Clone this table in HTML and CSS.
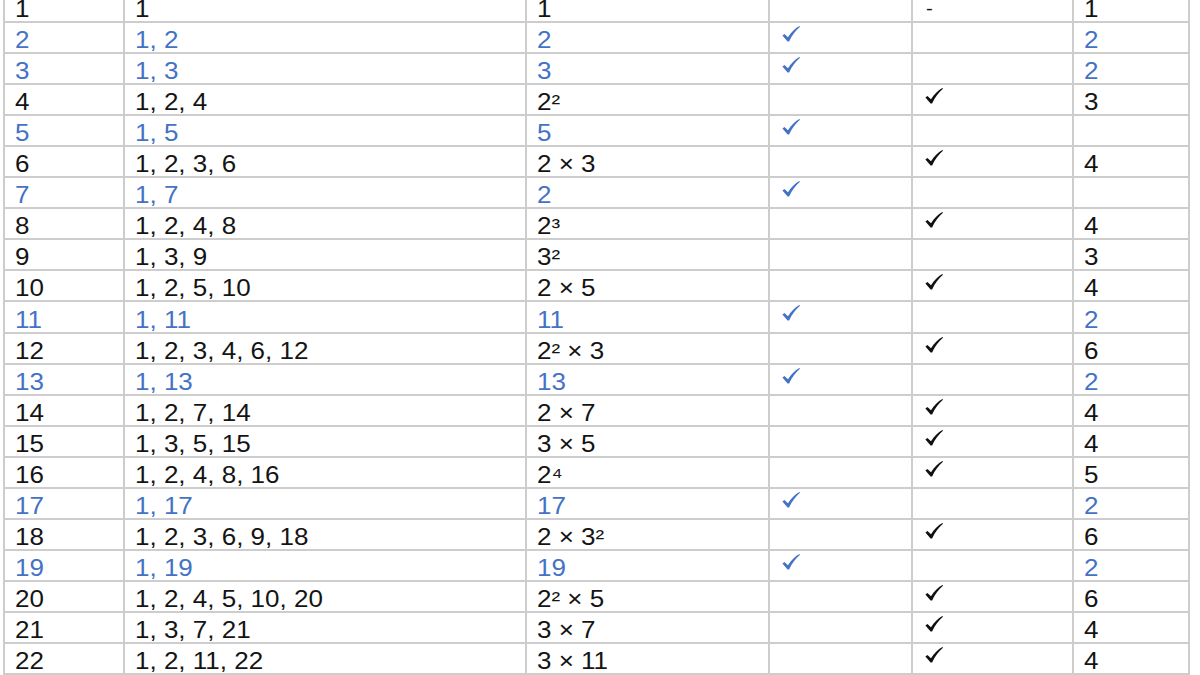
FILE: index.html
```html
<!DOCTYPE html>
<html lang="en">
<head>
<meta charset="utf-8">
<title>Divisors table</title>
<link rel="stylesheet" href="styles.css">
</head>
<body>
<svg class="defs" width="0" height="0" aria-hidden="true">
  <symbol id="chk" viewBox="0 0 18 16">
    <path d="M0.4 9.4 L2.4 7.9 L6 11.2 C9 6.3 13 2.4 17.4 0 L18 0.8 C13.6 4.6 10 9.2 7.1 15.6 L5.6 15.6 Z"/>
  </symbol>
</svg>
<table class="grid">
  <colgroup>
    <col class="c1"><col class="c2"><col class="c3"><col class="c4"><col class="c5"><col class="c6">
  </colgroup>
  <tbody>
    <tr><td><span class="t">1</span></td><td><span class="t">1</span></td><td><span class="t">1</span></td><td></td><td><span class="t dash">-</span></td><td><span class="t">1</span></td></tr>
    <tr class="prime"><td><span class="t">2</span></td><td><span class="t">1, 2</span></td><td><span class="t">2</span></td><td class="ck"><svg class="mark"><use href="#chk"/></svg></td><td></td><td><span class="t">2</span></td></tr>
    <tr class="prime"><td><span class="t">3</span></td><td><span class="t">1, 3</span></td><td><span class="t">3</span></td><td class="ck"><svg class="mark"><use href="#chk"/></svg></td><td></td><td><span class="t">2</span></td></tr>
    <tr><td><span class="t">4</span></td><td><span class="t">1, 2, 4</span></td><td><span class="t">2²</span></td><td></td><td class="ck"><svg class="mark"><use href="#chk"/></svg></td><td><span class="t">3</span></td></tr>
    <tr class="prime"><td><span class="t">5</span></td><td><span class="t">1, 5</span></td><td><span class="t">5</span></td><td class="ck"><svg class="mark"><use href="#chk"/></svg></td><td></td><td></td></tr>
    <tr><td><span class="t">6</span></td><td><span class="t">1, 2, 3, 6</span></td><td><span class="t">2 × 3</span></td><td></td><td class="ck"><svg class="mark"><use href="#chk"/></svg></td><td><span class="t">4</span></td></tr>
    <tr class="prime"><td><span class="t">7</span></td><td><span class="t">1, 7</span></td><td><span class="t">2</span></td><td class="ck"><svg class="mark"><use href="#chk"/></svg></td><td></td><td></td></tr>
    <tr><td><span class="t">8</span></td><td><span class="t">1, 2, 4, 8</span></td><td><span class="t">2³</span></td><td></td><td class="ck"><svg class="mark"><use href="#chk"/></svg></td><td><span class="t">4</span></td></tr>
    <tr><td><span class="t">9</span></td><td><span class="t">1, 3, 9</span></td><td><span class="t">3²</span></td><td></td><td></td><td><span class="t">3</span></td></tr>
    <tr><td><span class="t">10</span></td><td><span class="t">1, 2, 5, 10</span></td><td><span class="t">2 × 5</span></td><td></td><td class="ck"><svg class="mark"><use href="#chk"/></svg></td><td><span class="t">4</span></td></tr>
    <tr class="prime"><td><span class="t">11</span></td><td><span class="t">1, 11</span></td><td><span class="t">11</span></td><td class="ck"><svg class="mark"><use href="#chk"/></svg></td><td></td><td><span class="t">2</span></td></tr>
    <tr><td><span class="t">12</span></td><td><span class="t">1, 2, 3, 4, 6, 12</span></td><td><span class="t">2² × 3</span></td><td></td><td class="ck"><svg class="mark"><use href="#chk"/></svg></td><td><span class="t">6</span></td></tr>
    <tr class="prime"><td><span class="t">13</span></td><td><span class="t">1, 13</span></td><td><span class="t">13</span></td><td class="ck"><svg class="mark"><use href="#chk"/></svg></td><td></td><td><span class="t">2</span></td></tr>
    <tr><td><span class="t">14</span></td><td><span class="t">1, 2, 7, 14</span></td><td><span class="t">2 × 7</span></td><td></td><td class="ck"><svg class="mark"><use href="#chk"/></svg></td><td><span class="t">4</span></td></tr>
    <tr><td><span class="t">15</span></td><td><span class="t">1, 3, 5, 15</span></td><td><span class="t">3 × 5</span></td><td></td><td class="ck"><svg class="mark"><use href="#chk"/></svg></td><td><span class="t">4</span></td></tr>
    <tr><td><span class="t">16</span></td><td><span class="t">1, 2, 4, 8, 16</span></td><td><span class="t">2⁴</span></td><td></td><td class="ck"><svg class="mark"><use href="#chk"/></svg></td><td><span class="t">5</span></td></tr>
    <tr class="prime"><td><span class="t">17</span></td><td><span class="t">1, 17</span></td><td><span class="t">17</span></td><td class="ck"><svg class="mark"><use href="#chk"/></svg></td><td></td><td><span class="t">2</span></td></tr>
    <tr><td><span class="t">18</span></td><td><span class="t">1, 2, 3, 6, 9, 18</span></td><td><span class="t">2 × 3²</span></td><td></td><td class="ck"><svg class="mark"><use href="#chk"/></svg></td><td><span class="t">6</span></td></tr>
    <tr class="prime"><td><span class="t">19</span></td><td><span class="t">1, 19</span></td><td><span class="t">19</span></td><td class="ck"><svg class="mark"><use href="#chk"/></svg></td><td></td><td><span class="t">2</span></td></tr>
    <tr><td><span class="t">20</span></td><td><span class="t">1, 2, 4, 5, 10, 20</span></td><td><span class="t">2² × 5</span></td><td></td><td class="ck"><svg class="mark"><use href="#chk"/></svg></td><td><span class="t">6</span></td></tr>
    <tr><td><span class="t">21</span></td><td><span class="t">1, 3, 7, 21</span></td><td><span class="t">3 × 7</span></td><td></td><td class="ck"><svg class="mark"><use href="#chk"/></svg></td><td><span class="t">4</span></td></tr>
    <tr><td><span class="t">22</span></td><td><span class="t">1, 2, 11, 22</span></td><td><span class="t">3 × 11</span></td><td></td><td class="ck"><svg class="mark"><use href="#chk"/></svg></td><td><span class="t">4</span></td></tr>
  </tbody>
</table>
</body>
</html>
```

FILE: styles.css
```css
html, body {
  margin: 0;
  padding: 0;
  background: #ffffff;
  overflow: hidden;
}

.defs {
  position: absolute;
  width: 0;
  height: 0;
}

.grid {
  border-collapse: collapse;
  table-layout: fixed;
  width: 1187px;
  margin: -10px 0 0 3px;
  font-family: "Liberation Sans", Arial, sans-serif;
  font-size: 23px;
  color: #141414;
}

.c1 { width: 120px; }
.c2 { width: 402px; }
.c3 { width: 243px; }
.c4 { width: 143px; }
.c5 { width: 161px; }
.c6 { width: 116px; }

.grid tr {
  height: 31.05px;
}

.grid td {
  border: 2px solid #cdcdcd;
  padding: 0 0 0 10px;
  line-height: 24px;
  vertical-align: bottom;
  white-space: nowrap;
  overflow: hidden;
}

.t {
  display: inline-block;
  transform: scaleX(1.13);
  transform-origin: 0 50%;
}

.dash {
  font-size: 18px;
  margin-left: 3px;
}

.grid td.ck {
  vertical-align: top;
  padding-top: 3px;
  padding-left: 12px;
}

.mark {
  display: block;
  width: 18px;
  height: 16px;
  fill: #111111;
}

.prime {
  color: #4472c4;
}

.prime .mark {
  fill: #4472c4;
}
```
